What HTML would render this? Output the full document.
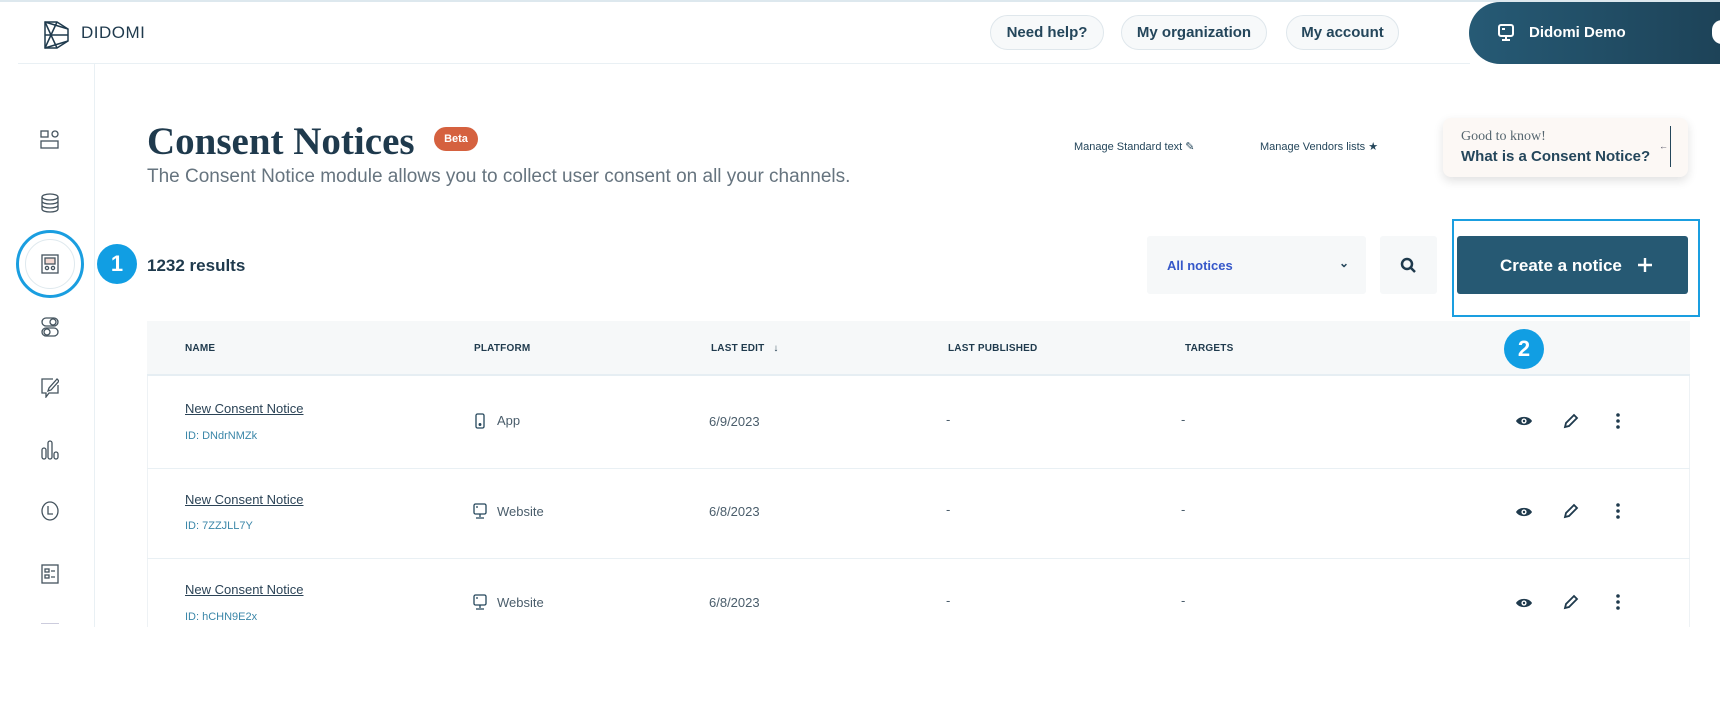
<!DOCTYPE html>
<html><head><meta charset="utf-8"><style>
*{margin:0;padding:0;box-sizing:border-box}
body{width:1720px;height:704px;background:#fff;font-family:"Liberation Sans",sans-serif;color:#1f3a4d;position:relative;overflow:hidden}
.a{position:absolute}
.btn{position:absolute;top:15px;height:35px;border:1px solid #dfe7ec;border-radius:18px;background:#f7f9fa;font-size:15px;font-weight:bold;color:#24465b;display:flex;align-items:center;justify-content:center}
.th{position:absolute;top:343px;font-size:10px;font-weight:bold;color:#1f3a4d;letter-spacing:.2px}
.nm{position:absolute;left:185px;font-size:13px;color:#2b4356;text-decoration:underline}
.id{position:absolute;left:185px;font-size:11px;color:#3a86a8}
.c{position:absolute;font-size:13px;color:#4a5d6b}
</style></head><body>
<div class="a" style="left:0;top:0;width:1720px;height:2px;background:#dde8ee"></div>
<div class="a" style="left:18px;top:63px;width:1452px;height:1px;background:#e9f0f4"></div>
<svg class="a" style="left:43px;top:20px" width="27" height="30" viewBox="0 0 27 30" fill="none" stroke="#1f3a4d" stroke-width="1.5"><path d="M2 2h12l11 7v12l-11 7H2z"/><path d="M2 2l23 7M2 28l23-7M14 2L2 28M14 28L2 2M2 15h23"/></svg>
<div class="a" style="left:81px;top:23px;font-size:17px;color:#1f3a4d;letter-spacing:.5px">DIDOMI</div>
<div class="btn" style="left:990px;width:114px">Need help?</div>
<div class="btn" style="left:1121px;width:146px">My organization</div>
<div class="btn" style="left:1286px;width:113px">My account</div>
<div class="a" style="left:1469px;top:2px;width:260px;height:62px;border-radius:31px 0 0 31px;background:linear-gradient(90deg,#265a75,#1d4257)"></div>
<svg class="a" style="left:1498px;top:24px" width="16" height="18" viewBox="0 0 16 18" fill="none" stroke="#fff" stroke-width="2"><rect x="1" y="1" width="14" height="11" rx="2"/><path d="M4 5h3M8 12v4M4 16h8"/></svg>
<div class="a" style="left:1529px;top:24px;font-size:15px;font-weight:bold;color:#fff">Didomi Demo</div>
<div class="a" style="left:1712px;top:20px;width:20px;height:24px;border-radius:12px;background:#fff"></div>
<div class="a" style="left:94px;top:64px;width:1px;height:563px;background:#e9f0f4"></div>
<svg class="a" style="left:40px;top:130px" width="20" height="20" viewBox="0 0 20 20" fill="none" stroke="#44535e" stroke-width="1.3"><rect x="1" y="1" width="7" height="6"/><circle cx="15" cy="4" r="3"/><rect x="1" y="11" width="17" height="7"/></svg>
<svg class="a" style="left:41px;top:193px" width="18" height="20" viewBox="0 0 18 20" fill="none" stroke="#44535e" stroke-width="1.3"><ellipse cx="9" cy="4" rx="8" ry="3"/><path d="M1 4v12c0 2 4 3 8 3s8-1 8-3V4M1 8c0 2 4 3 8 3s8-1 8-3M1 12c0 2 4 3 8 3s8-1 8-3"/></svg>
<div class="a" style="left:16px;top:230px;width:68px;height:68px;border-radius:50%;border:3px solid #1a9ee0"></div>
<div class="a" style="left:25px;top:239px;width:50px;height:50px;border-radius:50%;border:1px solid #dfe9ee"></div>
<svg class="a" style="left:41px;top:254px" width="18" height="20" viewBox="0 0 18 20" fill="none" stroke="#44535e" stroke-width="1.3"><rect x="1" y="1" width="16" height="18"/><rect x="4" y="4" width="10" height="6" fill="#f3d9d2"/><circle cx="6" cy="14" r="1.6"/><circle cx="12" cy="14" r="1.6"/></svg>
<svg class="a" style="left:41px;top:317px" width="18" height="20" viewBox="0 0 18 20" fill="none" stroke="#44535e" stroke-width="1.3"><rect x="1" y="1" width="16" height="8" rx="4"/><rect x="1" y="11" width="16" height="8" rx="4"/><circle cx="12" cy="5" r="3"/><circle cx="6" cy="15" r="3"/></svg>
<svg class="a" style="left:41px;top:378px" width="18" height="20" viewBox="0 0 18 20" fill="none" stroke="#44535e" stroke-width="1.3"><path d="M12 1H1v14h4v4l3-4h9V7"/><path d="M16 1l-8 9-1 3 3-1 8-9z"/></svg>
<svg class="a" style="left:41px;top:440px" width="18" height="20" viewBox="0 0 18 20" fill="none" stroke="#44535e" stroke-width="1.3"><rect x="1" y="8" width="4" height="11" rx="2"/><rect x="7" y="1" width="4" height="18" rx="2"/><rect x="13" y="12" width="4" height="7" rx="2"/></svg>
<svg class="a" style="left:41px;top:501px" width="18" height="20" viewBox="0 0 18 20" fill="none" stroke="#44535e" stroke-width="1.3"><ellipse cx="9" cy="10" rx="8" ry="9"/><path d="M7 5v8h5"/></svg>
<svg class="a" style="left:41px;top:564px" width="18" height="20" viewBox="0 0 18 20" fill="none" stroke="#44535e" stroke-width="1.3"><rect x="1" y="1" width="16" height="18"/><rect x="4" y="5" width="4" height="3"/><rect x="4" y="11" width="4" height="3"/><path d="M10 7h4M10 13h4"/></svg>
<div class="a" style="left:41px;top:623px;width:18px;height:4px;border-top:1.3px solid #ccd;"></div>
<div class="a" style="left:97px;top:244px;width:40px;height:40px;border-radius:50%;background:#119ee3;color:#fff;font-weight:bold;font-size:22px;text-align:center;line-height:40px">1</div>
<div class="a" style="left:147px;top:119px;font-family:'Liberation Serif',serif;font-weight:bold;font-size:39px;color:#1f3a4d">Consent Notices</div>
<div class="a" style="left:434px;top:127px;width:44px;height:24px;border-radius:12px;background:#d5613f;color:#fff;font-size:11px;font-weight:bold;text-align:center;line-height:24px">Beta</div>
<div class="a" style="left:147px;top:166px;font-size:19px;color:#66747f">The Consent Notice module allows you to collect user consent on all your channels.</div>
<div class="a" style="left:1074px;top:140px;font-size:11px;color:#24465b">Manage Standard text &#x270E;</div>
<div class="a" style="left:1260px;top:140px;font-size:11px;color:#24465b">Manage Vendors lists &#x2605;</div>
<div class="a" style="left:1443px;top:118px;width:245px;height:59px;border-radius:8px;background:#fcf8f5;box-shadow:0 4px 10px rgba(0,0,0,.12)"></div>
<div class="a" style="left:1461px;top:129px;font-family:'Liberation Serif',serif;font-size:14px;color:#56666f">Good to know!</div>
<div class="a" style="left:1461px;top:148px;font-size:15px;font-weight:bold;color:#24465b">What is a Consent Notice?</div>
<div class="a" style="left:1659px;top:141px;font-size:9px;color:#556">&larr;</div>
<div class="a" style="left:1670px;top:126px;width:1px;height:41px;background:#24465b"></div>
<div class="a" style="left:147px;top:256px;font-size:17px;font-weight:bold;color:#1f3a4d">1232 results</div>
<div class="a" style="left:1147px;top:236px;width:219px;height:58px;background:#f6f8f9;border-radius:3px"></div>
<div class="a" style="left:1167px;top:258px;font-size:13px;font-weight:bold;color:#3557c9">All notices</div>
<div class="a" style="left:1339px;top:256px;font-size:12px;font-weight:bold;color:#24465b">&#x2304;</div>
<div class="a" style="left:1380px;top:236px;width:57px;height:58px;background:#f6f8f9;border-radius:3px"></div>
<svg class="a" style="left:1400px;top:257px" width="17" height="17" viewBox="0 0 17 17" fill="none" stroke="#1f3a4d" stroke-width="2.5"><circle cx="7" cy="7" r="5"/><path d="M11 11l4 4"/></svg>
<div class="a" style="left:1452px;top:219px;width:248px;height:98px;border:2px solid #1a9ee0"></div>
<div class="a" style="left:1457px;top:236px;width:231px;height:58px;background:#265973;border-radius:3px"></div>
<div class="a" style="left:1500px;top:256px;font-size:17px;font-weight:bold;color:#fff">Create a notice</div>
<svg class="a" style="left:1637px;top:257px" width="16" height="16" viewBox="0 0 16 16" stroke="#fff" stroke-width="2.4"><path d="M8 1v14M1 8h14"/></svg>
<div class="a" style="left:147px;top:321px;width:1543px;height:306px;border:1px solid #eef2f5;border-bottom:none"></div>
<div class="a" style="left:147px;top:321px;width:1543px;height:55px;background:#f6f8f9;border-bottom:2px solid #e6eef3"></div>
<div class="th" style="left:185px">NAME</div>
<div class="th" style="left:474px">PLATFORM</div>
<div class="th" style="left:711px">LAST EDIT &nbsp;&nbsp;&darr;</div>
<div class="th" style="left:948px">LAST PUBLISHED</div>
<div class="th" style="left:1185px">TARGETS</div>
<div class="a" style="left:1504px;top:329px;width:40px;height:40px;border-radius:50%;background:#119ee3;color:#fff;font-weight:bold;font-size:22px;text-align:center;line-height:40px">2</div>
<div class="a" style="left:147px;top:468px;width:1543px;height:1px;background:#e9f0f4"></div>
<div class="a" style="left:147px;top:558px;width:1543px;height:1px;background:#e9f0f4"></div>
<div class="nm" style="top:401px">New Consent Notice</div><div class="id" style="top:430px">ID: DNdrNMZk</div>
<div class="nm" style="top:492px">New Consent Notice</div><div class="id" style="top:520px">ID: 7ZZJLL7Y</div>
<div class="nm" style="top:582px">New Consent Notice</div><div class="id" style="top:611px">ID: hCHN9E2x</div>
<svg class="a" style="left:475px;top:413px" width="10" height="16" viewBox="0 0 10 16" fill="none" stroke="#24465b" stroke-width="1.3"><rect x="1" y="1" width="8" height="14" rx="1.5"/><circle cx="5" cy="11.5" r=".8" fill="#24465b"/></svg>
<div class="c" style="left:497px;top:413px">App</div>
<svg class="a" style="left:473px;top:503px" width="14" height="16" viewBox="0 0 14 16" fill="none" stroke="#24465b" stroke-width="1.3"><rect x="1" y="1" width="12" height="10" rx="1.5"/><path d="M3 4h2M7 11v3M3 15h8"/></svg>
<div class="c" style="left:497px;top:504px">Website</div>
<svg class="a" style="left:473px;top:594px" width="14" height="16" viewBox="0 0 14 16" fill="none" stroke="#24465b" stroke-width="1.3"><rect x="1" y="1" width="12" height="10" rx="1.5"/><path d="M3 4h2M7 11v3M3 15h8"/></svg>
<div class="c" style="left:497px;top:595px">Website</div>
<div class="c" style="left:709px;top:414px">6/9/2023</div>
<div class="c" style="left:709px;top:504px">6/8/2023</div>
<div class="c" style="left:709px;top:595px">6/8/2023</div>
<div class="c" style="left:946px;top:412px">-</div><div class="c" style="left:1181px;top:412px">-</div>
<div class="c" style="left:946px;top:502px">-</div><div class="c" style="left:1181px;top:502px">-</div>
<div class="c" style="left:946px;top:593px">-</div><div class="c" style="left:1181px;top:593px">-</div>
<svg width="0" height="0" style="position:absolute"><defs>
<g id="eye"><path d="M1 7C4 1.5 14 1.5 17 7C14 12.5 4 12.5 1 7z" fill="#1f3a4d"/><circle cx="9" cy="7" r="2.6" fill="#fff"/><circle cx="9" cy="7" r="1.2" fill="#1f3a4d"/></g>
<g id="pen" fill="none" stroke="#1f3a4d" stroke-width="1.8"><path d="M3 15l1-4 8-8 3 3-8 8z"/></g>
<g id="dots" fill="#1f3a4d"><circle cx="3" cy="2" r="1.8"/><circle cx="3" cy="8" r="1.8"/><circle cx="3" cy="14" r="1.8"/></g>
</defs></svg>
<svg class="a" style="left:1515px;top:414px" width="18" height="14"><use href="#eye"/></svg>
<svg class="a" style="left:1562px;top:412px" width="18" height="18"><use href="#pen"/></svg>
<svg class="a" style="left:1615px;top:413px" width="6" height="16"><use href="#dots"/></svg>
<svg class="a" style="left:1515px;top:505px" width="18" height="14"><use href="#eye"/></svg>
<svg class="a" style="left:1562px;top:502px" width="18" height="18"><use href="#pen"/></svg>
<svg class="a" style="left:1615px;top:503px" width="6" height="16"><use href="#dots"/></svg>
<svg class="a" style="left:1515px;top:596px" width="18" height="14"><use href="#eye"/></svg>
<svg class="a" style="left:1562px;top:593px" width="18" height="18"><use href="#pen"/></svg>
<svg class="a" style="left:1615px;top:594px" width="6" height="16"><use href="#dots"/></svg>
</body></html>
